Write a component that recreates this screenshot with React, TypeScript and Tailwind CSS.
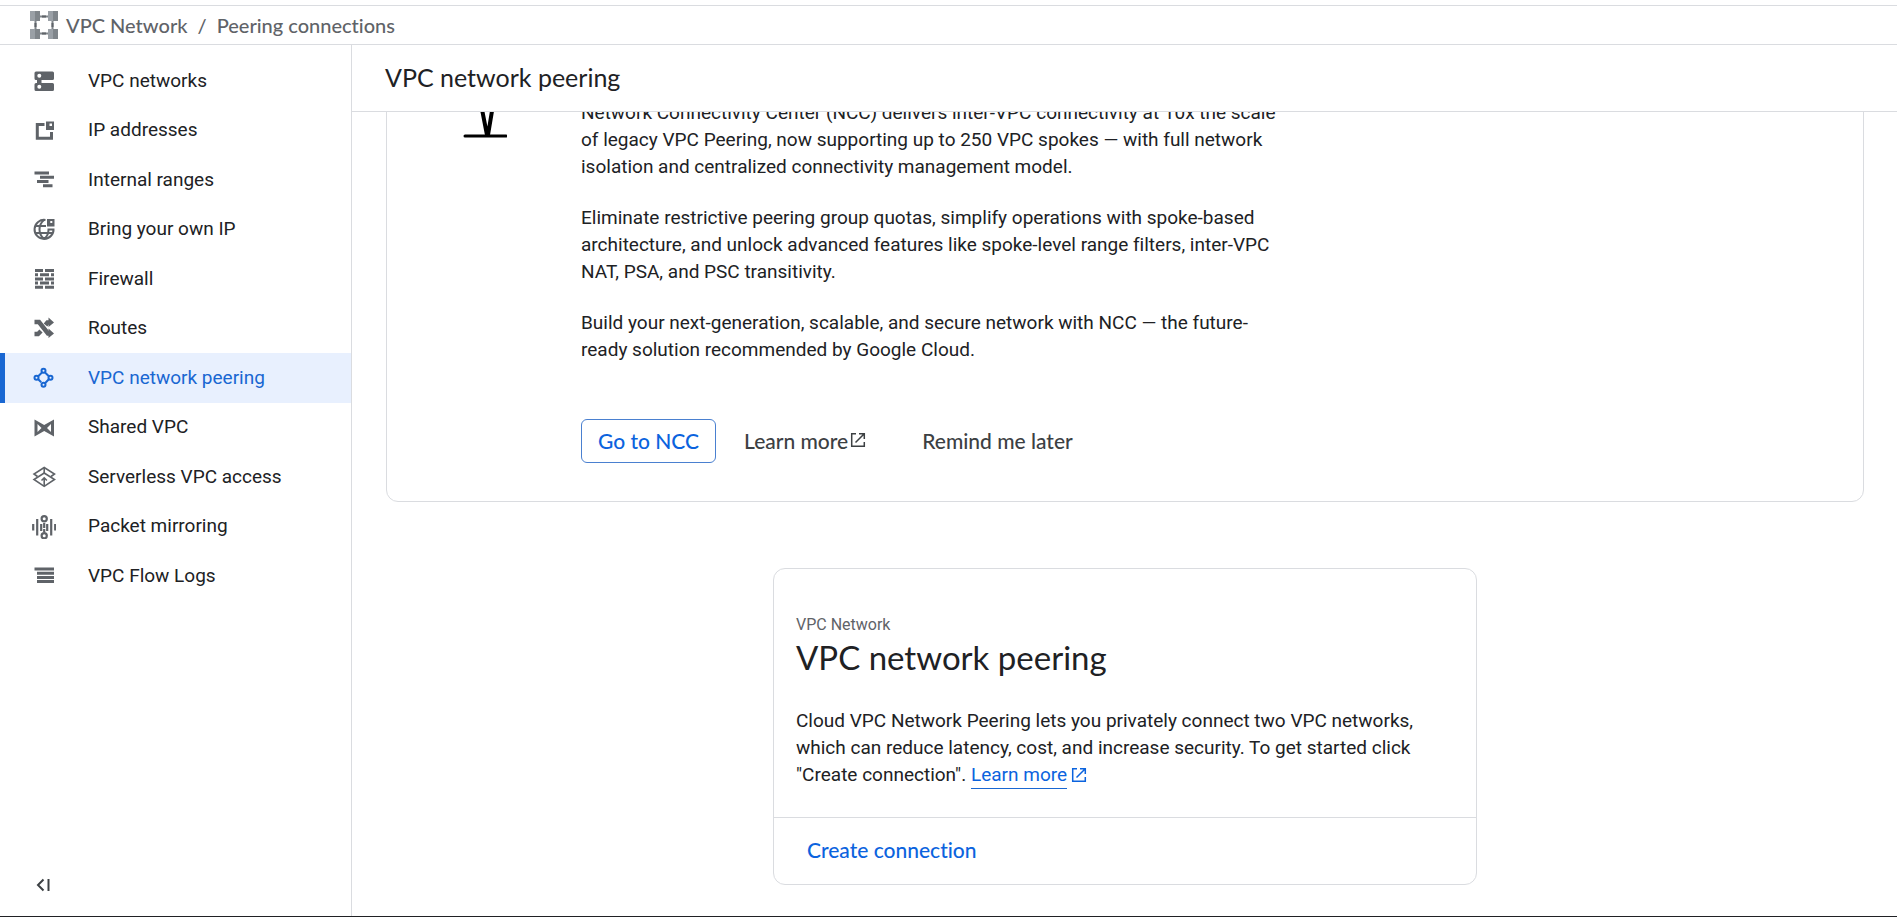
import React from "react";

const ink = "text-[#202124]";

const ServerIcon = () => (
  <svg viewBox="0 0 24 24" className="h-6 w-6" fill="currentColor" fillRule="evenodd" aria-hidden="true">
    <path d="M4 2.500h16.500a1.500 1.500 0 0 1 1.500 1.500v5.500a1.500 1.500 0 0 1-1.500 1.500H9.500v3H20.500a1.500 1.500 0 0 1 1.500 1.500V20.500a1.500 1.500 0 0 1-1.500 1.500H4a1.500 1.500 0 0 1-1.500-1.500v-5A1.500 1.500 0 0 1 4 14h1v-3H4a1.500 1.500 0 0 1-1.500-1.500V4A1.500 1.500 0 0 1 4 2.500zM7.300 4.800a2 2 0 1 0 0 4 2 2 0 0 0 0-4zM7.300 15.800a2 2 0 1 0 0 4 2 2 0 0 0 0-4z" />
  </svg>
);

const AddressIcon = () => (
  <svg viewBox="0 0 24 24" className="h-6 w-6" aria-hidden="true">
    <path d="M12.500 6.500H5.300v13.700h14.200V14" fill="none" stroke="currentColor" strokeWidth="3" />
    <path d="M14 3.500h8V12h-8zM17.500 5.500V8H20V5.500z" fill="currentColor" fillRule="evenodd" />
  </svg>
);

const RangesIcon = () => (
  <svg viewBox="0 0 24 24" className="h-6 w-6" fill="currentColor" aria-hidden="true">
    <path d="M2.500 3.500H17v3H2.500zM8 7.800h14v3H8zM5 12h11.500v3H5zM11 16.300h9.500v3H11z" />
  </svg>
);

const GlobeIcon = () => (
  <svg viewBox="0 0 24 24" className="h-6 w-6" fill="none" stroke="currentColor" strokeWidth="2" aria-hidden="true">
    <path d="M13.500 3A9.500 9.500 0 1 0 21.500 11.500M3.500 9H14M3.500 16h17M12 22c-6-5-6-14 0-19M12 22c3.500-2.500 4.500-6 4.500-9.500h4.500" />
    <path d="M15 2h7.500v7.500H15zM18.300 4v2h2V4z" fill="currentColor" fillRule="evenodd" stroke="none" />
  </svg>
);

const FirewallIcon = () => (
  <svg viewBox="0 0 24 24" className="h-6 w-6" fill="currentColor" aria-hidden="true">
    <path d="M3 2h8v3H3zM13 2h9v3h-9zM3 6.200h3v3H3zM8 6.200h9v3H8zM19 6.200h3v3h-3zM3 10.400h8v3H3zM13 10.400h9v3h-9zM3 14.600h3v3H3zM8 14.600h9v3H8zM19 14.600h3v3h-3zM3 18.800h8v3H3zM13 18.800h9v3h-9z" />
  </svg>
);

const RoutesIcon = () => (
  <svg viewBox="0 0 24 24" className="h-6 w-6" aria-hidden="true">
    <path d="M2.500 6H7l9 11.500h2M2.500 18H6l3-3M13.500 9l2-2.500H18" fill="none" stroke="currentColor" strokeWidth="4.500" />
    <path d="M16.500 1.500L22 6.500l-5.500 4.500zM16.500 12.500L22 17.500l-5.500 4.500z" fill="currentColor" />
  </svg>
);

const PeeringIcon = () => (
  <svg viewBox="0 0 24 24" className="h-6 w-6" fill="none" stroke="currentColor" strokeWidth="2" aria-hidden="true">
    <circle cx="11.500" cy="4.700" r="2" />
    <circle cx="4.500" cy="11.700" r="2" />
    <circle cx="18.500" cy="11.700" r="2" />
    <circle cx="11.500" cy="18.700" r="2" />
    <path d="M10 6.500L6.200 10.200M13 6.500l3.900 3.800M6.200 13.200l3 3M16.800 13.200l-3.800 4" />
  </svg>
);

const SharedIcon = () => (
  <svg viewBox="0 0 24 24" className="h-6 w-6" fill="currentColor" fillRule="evenodd" aria-hidden="true">
    <path d="M2.500 3.500L12.200 9 22 3.500v17L12.200 15 2.500 20.500zM5.500 8v8l4-4zM19 8l-4 4 4 4z" />
  </svg>
);

const ServerlessIcon = () => (
  <svg viewBox="0 0 24 24" className="h-6 w-6" fill="none" stroke="currentColor" strokeWidth="1.600" aria-hidden="true">
    <path d="M5.500 11.500L2 9l10.200-6.500L22.500 9 19 11.500" />
    <path d="M12.200 8L22.500 14.500l-10.300 6.800L2 14.500z" />
    <path d="M12.200 3v5M12.200 21v-7.500M9.500 15.500l2.700-2.700 2.700 2.700" />
  </svg>
);

const MirrorIcon = () => (
  <svg viewBox="0 0 24 24" className="h-6 w-6" fill="none" stroke="currentColor" strokeWidth="2.200" aria-hidden="true">
    <circle cx="12.200" cy="3.700" r="2.600" />
    <circle cx="12.200" cy="20.700" r="2.600" />
    <path d="M1.200 9v6.500M5.200 4v16.500M9.200 9v7M12.200 8v5M12.200 14v3M15.200 9v7M19.200 4v16.500M23.200 9v6.500" />
  </svg>
);

const LogsIcon = () => (
  <svg viewBox="0 0 24 24" className="h-6 w-6" fill="currentColor" aria-hidden="true">
    <path d="M2.500 3.500H22v3H2.500zM5 7.700h17v3H5zM5 11.900h17v3H5zM5 16.100h17v3H5z" />
  </svg>
);

const NetworkLogo = () => (
  <svg viewBox="0 0 28 28" className="h-7 w-7" aria-hidden="true">
    <path d="M5.500 5.500h17v17h-17z" fill="none" stroke="#80868b" strokeWidth="2" />
    <path d="M0 0h10v10H0zM18 0h10v10H18zM0 18h10v10H0zM18 18h10v10H18z" fill="#9aa0a6" />
    <path d="M5 0h5v10H5zM23 0h5v10h-5zM5 18h5v10H5zM23 18h5v10h-5z" fill="#80868b" />
    <path d="M12 5.500h4M12 22.500h4M5.500 12v4M22.500 12v4" stroke="#5f6368" strokeWidth="2" />
  </svg>
);

const ExternalIcon = () => (
  <svg viewBox="0 0 16 16" className="h-4 w-4" fill="none" stroke="currentColor" strokeWidth="1.500" aria-hidden="true">
    <path d="M6 1.700H1.700v12.600h12.600V10M9 1.700h5.300V7M14 2L5.500 10.500" />
  </svg>
);

const navItems = [
  { label: "VPC networks", icon: ServerIcon },
  { label: "IP addresses", icon: AddressIcon },
  { label: "Internal ranges", icon: RangesIcon },
  { label: "Bring your own IP", icon: GlobeIcon },
  { label: "Firewall", icon: FirewallIcon },
  { label: "Routes", icon: RoutesIcon },
  { label: "VPC network peering", icon: PeeringIcon, active: true },
  { label: "Shared VPC", icon: SharedIcon },
  { label: "Serverless VPC access", icon: ServerlessIcon },
  { label: "Packet mirroring", icon: MirrorIcon },
  { label: "VPC Flow Logs", icon: LogsIcon },
];

const Sidebar = () => (
  <nav className="flex w-[352px] shrink-0 flex-col justify-between border-r border-[#dadce0] pt-[11px] pb-[19px]">
    <ul className="grid h-[545px] auto-rows-fr">
      {navItems.map(({ label, icon: Icon, active }) => (
        <li key={label} className="flex">
          <a
            href="#"
            className={
              active
                ? "flex flex-1 items-center gap-8 border-l-[5px] border-[#1967d2] bg-[#e8f0fe] pl-[27px] text-[19px] text-[#1967d2]"
                : "flex flex-1 items-center gap-8 pl-8 text-[19px] text-[#202124]"
            }
          >
            <span className={active ? "text-[#1967d2]" : "text-[#5f6368]"}>
              <Icon />
            </span>
            {label}
          </a>
        </li>
      ))}
    </ul>
    <button className="ml-8 flex h-6 w-6 items-center justify-center text-[#3c4043]" aria-label="Collapse navigation">
      <svg viewBox="0 0 24 24" className="h-6 w-6" fill="none" stroke="currentColor" strokeWidth="2" aria-hidden="true">
        <path d="M11.500 6.500L6 12l5.500 5.500M16.500 6v12" />
      </svg>
    </button>
  </nav>
);

const App = () => {
  return (
    <div className="flex h-screen flex-col overflow-hidden border-b border-[#202124] bg-white pt-[5px] font-['Roboto',sans-serif] [font-variant-ligatures:none]">
      <header className="flex h-10 shrink-0 items-center gap-2 border-y border-[#dadce0] pl-[30px] font-['Lato',sans-serif] text-[20px] leading-6 font-medium text-[#5f6368]">
        <NetworkLogo />
        <a href="#">VPC Network</a>
        <span className="px-0.5">/</span>
        <span>Peering connections</span>
      </header>

      <div className="flex min-h-0 flex-1">
        <Sidebar />
        <main className="flex min-w-0 flex-1 flex-col">
          <div className="flex h-[67px] shrink-0 items-center border-b border-[#dadce0] pl-[33px]">
            <h1 className={`font-['Lato',sans-serif] text-[25px] ${ink}`}>VPC network peering</h1>
          </div>

          <div className="flex min-h-0 flex-1 flex-col justify-end overflow-hidden pr-[33px] pb-[31px] pl-[34px]">
            <section className="flex gap-[74px] rounded-xl border border-[#dadce0] px-[76px] pt-10 pb-[38px]">
              <svg viewBox="0 0 44 40" className="h-10 w-11 shrink-0" fill="none" stroke="#000" aria-hidden="true">
                <path d="M17 0L24 36M31 0L25 36" strokeWidth="4" />
                <path d="M2 37h41" strokeWidth="3" strokeLinecap="round" />
              </svg>
              <div className={`w-[710px] text-[19px] leading-[27px] ${ink}`}>
                <p className="mb-6">
                  Network Connectivity Center (NCC) delivers inter-VPC connectivity at 10x the scale of legacy VPC
                  Peering, now supporting up to 250 VPC spokes — with full network isolation and centralized
                  connectivity management model.
                </p>
                <p className="mb-6">
                  Eliminate restrictive peering group quotas, simplify operations with spoke-based architecture, and
                  unlock advanced features like spoke-level range filters, inter-VPC NAT, PSA, and PSC transitivity.
                </p>
                <p>
                  Build your next-generation, scalable, and secure network with NCC — the future-ready solution
                  recommended by Google Cloud.
                </p>
                <div className="mt-14 flex items-center font-['Lato',sans-serif] text-[21px] font-medium text-[#3c4043]">
                  <button className="h-11 rounded-md border border-[#4a80d0] px-4 pb-0.5 text-[#0b63de]">Go to NCC</button>
                  <a href="#" className="ml-7 flex items-center gap-0.5 pb-0.5">
                    Learn more
                    <ExternalIcon />
                  </a>
                  <button className="ml-14 pb-0.5">Remind me later</button>
                </div>
              </div>
            </section>

            <section className="mx-auto mt-[66px] w-[704px] shrink-0 rounded-xl border border-[#dadce0]">
              <div className={`px-[22px] pt-11 pb-7 ${ink}`}>
                <p className="text-[16px] leading-6 text-[#5f6368]">VPC Network</p>
                <h2 className="font-['Lato',sans-serif] text-[33px] leading-10">VPC network peering</h2>
                <p className="mt-[30px] text-[19px] leading-[27px]">
                  Cloud VPC Network Peering lets you privately connect two VPC networks, which can reduce latency, cost,
                  and increase security. To get started click "Create connection".{" "}
                  <a href="#" className="inline-flex items-center gap-1 text-[#0b63de]">
                    <span className="border-b border-[#1967d2]">Learn more</span>
                    <ExternalIcon />
                  </a>
                </p>
              </div>
              <div className="flex h-[67px] items-center border-t border-[#dadce0] pl-[33px]">
                <button className="pb-0.5 font-['Lato',sans-serif] text-[21px] font-medium text-[#0b63de]">Create connection</button>
              </div>
            </section>
          </div>
        </main>
      </div>
    </div>
  );
};

export default App;
